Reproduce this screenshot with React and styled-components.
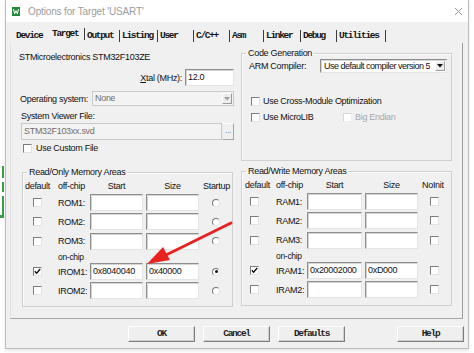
import React from 'react';
import styled, { createGlobalStyle } from 'styled-components';

const GlobalStyle = createGlobalStyle`
  html, body {
    margin: 0;
    padding: 0;
    background: #fff;
  }
  body {
    font-family: "Liberation Sans", Arial, sans-serif;
  }
`;

const Screen = styled.div`
  position: relative;
  width: 474px;
  height: 353px;
  overflow: hidden;
  background: #fff;
`;

const BackdropMark = styled.span`
  position: absolute;
  left: 0;
  top: ${(p) => p.$top}px;
  width: 4px;
  height: ${(p) => p.$h}px;
  border-right: 2px solid #3aa04a;
  border-bottom: ${(p) => (p.$foot ? '3px solid #3aa04a' : 'none')};
  box-sizing: border-box;
`;

const Window = styled.div`
  position: relative;
  z-index: 1;
  margin-left: 5px;
  width: 462px;
  height: 348px;
  border: 1px solid #bdbdbd;
  border-top: none;
  background: #f0f0f0;
  display: flex;
  flex-direction: column;
  box-shadow: 0 2px 3px rgba(0, 0, 0, 0.1);
  font-size: 9px;
  letter-spacing: -0.3px;
  color: #111;
`;

const TitleBar = styled.div`
  flex: none;
  height: 22px;
  background: #fff;
  display: flex;
  align-items: center;
  padding: 0 6px;
`;

const TitleText = styled.span`
  margin-left: 8px;
  font-size: 10px;
  letter-spacing: -0.15px;
  color: #9c9c9c;
`;

const CloseIcon = styled.svg`
  margin-left: auto;
`;

const TabStrip = styled.div`
  flex: none;
  height: 21px;
  display: flex;
  align-items: flex-end;
  padding-left: 8px;
`;

const Tab = styled.div`
  box-sizing: border-box;
  width: ${(p) => p.$w}px;
  height: 12px;
  padding-left: 2px;
  margin-bottom: ${(p) => (p.$active ? 3 : 1)}px;
  border-right: ${(p) => (p.$sep ? '1px solid #3c3c3c' : 'none')};
  font: bold 9.5px/12px "Liberation Mono", "Courier New", monospace;
  letter-spacing: -1.3px;
  color: #151515;
  white-space: nowrap;
`;

const TabPage = styled.div`
  flex: none;
  box-sizing: border-box;
  margin-left: 4px;
  width: 453px;
  height: 276px;
  border-left: 1px solid #e2e2e2;
  border-right: 1px solid #9d9d9d;
  border-bottom: 1px solid #a8a8a8;
  padding: 0 10px 0 8px;
  display: grid;
  grid-template-columns: 215px 211px;
  column-gap: 7px;
  align-items: start;
`;

const Column = styled.div`
  display: flex;
  flex-direction: column;
`;

const Line = styled.div`
  height: ${(p) => p.$h || 12}px;
  line-height: ${(p) => p.$h || 12}px;
  margin-top: ${(p) => p.$mt || 0}px;
  padding-left: ${(p) => p.$pl || 0}px;
  white-space: nowrap;
`;

const Row = styled.div`
  display: flex;
  align-items: center;
  justify-content: ${(p) => (p.$end ? 'flex-end' : 'flex-start')};
  gap: ${(p) => p.$gap || 0}px;
  height: ${(p) => p.$h}px;
  margin-top: ${(p) => p.$mt || 0}px;
  padding-left: ${(p) => p.$pl || 0}px;
  padding-right: ${(p) => p.$pr || 0}px;
  white-space: nowrap;
`;

const Field = styled.div`
  box-sizing: border-box;
  width: ${(p) => (p.$w ? `${p.$w}px` : '100%')};
  height: ${(p) => p.$h || 17}px;
  flex: ${(p) => (p.$grow ? 1 : 'none')};
  line-height: ${(p) => (p.$h || 17) - 2}px;
  padding-left: 2px;
  background: ${(p) => (p.$disabled ? '#f3f3f3' : '#fff')};
  color: ${(p) => (p.$disabled ? '#707070' : '#111')};
  border: 1px solid;
  border-color: ${(p) =>
    p.$disabled ? '#c9c9c9' : '#8d8d8d #e4e4e4 #e4e4e4 #8d8d8d'};
  box-shadow: ${(p) => (p.$disabled ? 'none' : 'inset 1px 1px #d6d6d6')};
  white-space: nowrap;
  overflow: hidden;
`;

const Select = styled(Field)`
  display: flex;
  align-items: center;
  justify-content: space-between;
  padding-left: ${(p) => (p.$disabled ? 2 : 3)}px;
  padding-right: 1px;
  margin-left: auto;
`;

const SelectText = styled.span`
  letter-spacing: ${(p) => (p.$tight ? -0.5 : -0.3)}px;
  overflow: hidden;
`;

const DropButton = styled.span`
  box-sizing: border-box;
  width: 10px;
  height: ${(p) => p.$h}px;
  flex: none;
  display: flex;
  align-items: center;
  justify-content: center;
  background: #ececec;
  border: 1px solid;
  border-color: #fff #9a9a9a #9a9a9a #fff;
`;

const Browse = styled.div`
  box-sizing: border-box;
  width: 12px;
  height: 17px;
  flex: none;
  line-height: 13px;
  text-align: center;
  font-size: 8px;
  color: #666;
  background: #f0f0f0;
  border: 1px solid;
  border-color: #fff #a5a5a5 #a5a5a5 #e8e8e8;
`;

const Box = styled.span`
  box-sizing: border-box;
  display: inline-flex;
  align-items: center;
  justify-content: center;
  flex: none;
  width: 9px;
  height: 9px;
  margin-left: ${(p) => p.$ml || 0}px;
  background: #fff;
  border: 1px solid;
  border-color: ${(p) =>
    p.$disabled ? '#d6d6d6 #eeeeee #eeeeee #d6d6d6' : '#7c7c7c #e2e2e2 #e2e2e2 #7c7c7c'};
`;

const Radio = styled.span`
  box-sizing: border-box;
  justify-self: center;
  display: inline-flex;
  align-items: center;
  justify-content: center;
  width: 8px;
  height: 8px;
  border-radius: 50%;
  background: #fff;
  border: 1px solid;
  border-color: #7a7a7a #e6e6e6 #e6e6e6 #7a7a7a;
`;

const Dot = styled.span`
  width: 3px;
  height: 3px;
  border-radius: 50%;
  background: #111;
`;

const Muted = styled.span`
  color: #a8a8a8;
`;

const Group = styled.fieldset`
  box-sizing: border-box;
  min-width: 0;
  margin: ${(p) => p.$margin};
  height: ${(p) => (p.$h ? `${p.$h}px` : 'auto')};
  padding: 0 0 6px 0;
  border: 1px solid #d0d0d0;
  box-shadow: inset 1px 1px #fbfbfb;
`;

const Legend = styled.legend`
  margin-left: 4px;
  padding: 0 2px;
  height: 12px;
  line-height: 12px;
  white-space: nowrap;
`;

const MemGrid = styled.div`
  display: grid;
  grid-template-columns: ${(p) => p.$cols};
  grid-template-rows: 15px 19px 19px 20px 11px 19px 19px;
  column-gap: 3px;
  align-items: center;
`;

const Head = styled.div`
  padding-left: ${(p) => p.$pl || 0}px;
  text-align: ${(p) => (p.$center ? 'center' : 'left')};
  white-space: nowrap;
`;

const AreaLabel = styled.div`
  white-space: nowrap;
  font-size: ${(p) => (p.$small ? 8.5 : 9)}px;
  grid-column: ${(p) => (p.$span ? '2 / -1' : 'auto')};
`;

const CodeGenRow = styled.div`
  display: grid;
  grid-template-columns: 92px auto;
  align-items: center;
  height: 12px;
  margin-top: ${(p) => p.$mt}px;
  padding-left: 9px;
`;

const Option = styled.div`
  display: flex;
  align-items: center;
  gap: 3px;
  white-space: nowrap;
  grid-column: ${(p) => (p.$wide ? '1 / -1' : 'auto')};
`;

const ButtonBar = styled.div`
  flex: 1;
  display: flex;
  align-items: flex-start;
  gap: 8px;
  padding: 7px 4px 0 122px;
`;

const DlgButton = styled.div`
  box-sizing: border-box;
  width: 67px;
  height: 16px;
  margin-left: ${(p) => (p.$push ? 'auto' : 0)};
  text-align: center;
  font: bold 9.5px/14px "Liberation Mono", "Courier New", monospace;
  letter-spacing: -1.3px;
  color: #222;
  background: #efefef;
  border: 1px solid;
  border-color: #fdfdfd #7e7e7e #7e7e7e #fdfdfd;
  box-shadow: inset -1px -1px #cfcfcf;
`;

const ArrowOverlay = styled.svg`
  position: absolute;
  left: 0;
  top: 0;
  z-index: 2;
  pointer-events: none;
`;

const Check = () => (
  <svg width="7" height="7" viewBox="0 0 7 7">
    <path d="M0.8 3.2 L2.6 5.2 L6.2 1" fill="none" stroke="#111" strokeWidth="1.4" />
  </svg>
);

const CheckBox = ({ checked, disabled, ml }) => (
  <Box $ml={ml} $disabled={disabled}>{checked && <Check />}</Box>
);

const Arrow = ({ disabled }) => (
  <svg width="6" height="4" viewBox="0 0 6 4">
    <path d="M0 0 H6 L3 3.5 Z" fill={disabled ? '#a0a0a0' : '#111'} />
  </svg>
);

const tabs = [
  { label: 'Device', width: 36 },
  { label: 'Target', width: 35, sep: true, active: true },
  { label: 'Output', width: 35, sep: true },
  { label: 'Listing', width: 38, sep: true },
  { label: 'User', width: 36, sep: true },
  { label: 'C/C++', width: 36, sep: true },
  { label: 'Asm', width: 34, sep: true },
  { label: 'Linker', width: 37, sep: true },
  { label: 'Debug', width: 36, sep: true },
  { label: 'Utilities', width: 49, sep: true },
];

const romRows = {
  offChip: [{ name: 'ROM1' }, { name: 'ROM2' }, { name: 'ROM3' }],
  onChip: [
    { name: 'IROM1', checked: true, start: '0x8040040', size: '0x40000', flag: true },
    { name: 'IROM2' },
  ],
};

const ramRows = {
  offChip: [{ name: 'RAM1' }, { name: 'RAM2' }, { name: 'RAM3' }],
  onChip: [
    { name: 'IRAM1', checked: true, start: '0x20002000', size: '0xD000' },
    { name: 'IRAM2' },
  ],
};

const MemoryArea = ({ title, cols, boxOffset, headPad, lastHead, lastKind, rows, margin }) => {
  const renderRow = (r) => (
    <React.Fragment key={r.name}>
      <CheckBox checked={r.checked} ml={boxOffset} />
      <AreaLabel>{r.name}:</AreaLabel>
      <Field>{r.start}</Field>
      <Field>{r.size}</Field>
      {lastKind === 'radio' ? (
        <Radio>{r.flag && <Dot />}</Radio>
      ) : (
        <CheckBox ml={9} />
      )}
    </React.Fragment>
  );

  return (
    <Group $margin={margin}>
      <Legend>{title}</Legend>
      <MemGrid $cols={cols}>
        <Head $pl={headPad}>default</Head>
        <Head>off-chip</Head>
        <Head $center>Start</Head>
        <Head $center>Size</Head>
        <Head $pl={1}>{lastHead}</Head>
        {rows.offChip.map(renderRow)}
        <span />
        <AreaLabel $small $span>on-chip</AreaLabel>
        {rows.onChip.map(renderRow)}
      </MemGrid>
    </Group>
  );
};

export default function App() {
  return (
    <Screen>
      <GlobalStyle />
      <BackdropMark $top={166} $h={12} />
      <BackdropMark $top={182} $h={10} />
      <BackdropMark $top={196} $h={22} $foot />
      <Window>
        <TitleBar>
          <svg width="8" height="9" viewBox="0 0 8 9">
            <rect x="0" y="0" width="8" height="9" fill="#23873a" />
            <path d="M1.5 2 L2.6 7 L4 3.6 L5.4 7 L6.5 2" fill="none" stroke="#fff" strokeWidth="1" />
          </svg>
          <TitleText>Options for Target 'USART'</TitleText>
          <CloseIcon width="7" height="7" viewBox="0 0 7 7">
            <path d="M0 0 L7 7 M7 0 L0 7" stroke="#8c8c8c" strokeWidth="0.9" />
          </CloseIcon>
        </TitleBar>

        <TabStrip>
          {tabs.map((t) => (
            <Tab key={t.label} $w={t.width} $sep={t.sep} $active={t.active}>
              {t.label}
            </Tab>
          ))}
        </TabStrip>

        <TabPage>
          <Column>
            <Line $h={14} $mt={7}>STMicroelectronics STM32F103ZE</Line>
            <Row $h={17} $mt={5} $end $gap={3}>
              <span>
                <u>X</u>tal (MHz):
              </span>
              <Field $w={49}>12.0</Field>
            </Row>
            <Row $h={15} $mt={5} $pl={1}>
              <span>Operating system:</span>
              <Select $w={142} $h={15} $disabled>
                <SelectText>None</SelectText>
                <DropButton $h={11}>
                  <Arrow disabled />
                </DropButton>
              </Select>
            </Row>
            <Line $mt={4} $pl={2}>System Viewer File:</Line>
            <Row $h={17} $mt={1} $pl={2}>
              <Field $grow $disabled>STM32F103xx.svd</Field>
              <Browse>...</Browse>
            </Row>
            <Row $h={12} $mt={2} $pl={4} $gap={4}>
              <CheckBox />
              <span>Use Custom File</span>
            </Row>
            <MemoryArea
              title="Read/Only Memory Areas"
              cols="32px 29px 53px 53px 28px"
              boxOffset={10}
              headPad={2}
              lastHead="Startup"
              lastKind="radio"
              rows={romRows}
              margin="12px 1px 0 3px"
            />
          </Column>

          <Column>
            <Group $margin="4px 0 0 0" $h={114}>
              <Legend>Code Generation</Legend>
              <Row $h={14} $pl={7} $pr={4}>
                <span>ARM Compiler:</span>
                <Select $w={127} $h={14}>
                  <SelectText $tight>Use default compiler version 5</SelectText>
                  <DropButton $h={10}>
                    <Arrow />
                  </DropButton>
                </Select>
              </Row>
              <CodeGenRow $mt={22}>
                <Option $wide>
                  <CheckBox />
                  <span>Use Cross-Module Optimization</span>
                </Option>
              </CodeGenRow>
              <CodeGenRow $mt={4}>
                <Option>
                  <CheckBox />
                  <span>Use MicroLIB</span>
                </Option>
                <Option>
                  <CheckBox disabled />
                  <Muted>Big Endian</Muted>
                </Option>
              </CodeGenRow>
            </Group>
            <MemoryArea
              title="Read/Write Memory Areas"
              cols="31px 28px 55px 53px 26px"
              boxOffset={8}
              headPad={3}
              lastHead="NoInit"
              lastKind="check"
              rows={ramRows}
              margin="4px 0 0 0"
            />
          </Column>
        </TabPage>

        <ButtonBar>
          <DlgButton>OK</DlgButton>
          <DlgButton>Cancel</DlgButton>
          <DlgButton>Defaults</DlgButton>
          <DlgButton $push>Help</DlgButton>
        </ButtonBar>
      </Window>

      <ArrowOverlay width="474" height="353" viewBox="0 0 474 353">
        <line x1="231" y1="223" x2="164" y2="256" stroke="#e8231f" strokeWidth="3" strokeLinecap="round" />
        <polygon points="147,264 170,260 163,247" fill="#e8231f" />
      </ArrowOverlay>
    </Screen>
  );
}
